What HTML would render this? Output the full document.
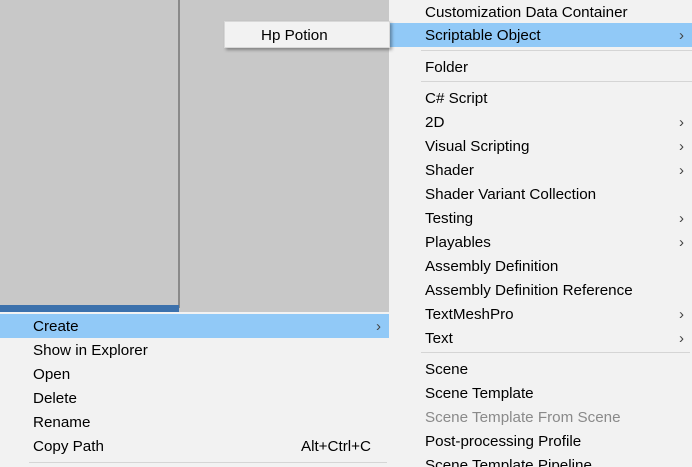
<!DOCTYPE html>
<html style="width:692px;height:467px;overflow:hidden"><head><style>
*{margin:0;padding:0;box-sizing:border-box}
body{width:692px;height:467px;overflow:hidden;background:#c8c8c8;position:relative;font-family:"Liberation Sans","Noto Sans CJK KR",sans-serif;font-size:15.2px;color:#000}
.vl{position:absolute;left:178px;top:0;width:2px;height:308px;background:#8a8a8a}
.bar{position:absolute;left:0;top:305px;width:179px;height:8px;background:#3c71ac}
.menu{position:absolute;background:#f2f2f2;overflow:hidden}
.it{position:absolute;left:0;right:0;height:24px;line-height:25px}
.it span{position:absolute}
.hl{background:#91c9f7}
.arr{position:absolute;right:8px;font-size:15px;color:#444}
.sep{position:absolute;height:1px;background:#d5d5d5;right:0}
.dis{color:#8a8a8a}
</style></head><body>
<div class="vl"></div><div class="bar"></div>
<div class="menu" style="left:0;top:312px;width:389px;height:155px">
 <div class="it hl" style="top:2px"><span style="left:33px">Create</span><span class="arr" style="right:8px">&#x203A;</span></div>
 <div class="it" style="top:26px"><span style="left:33px">Show in Explorer</span></div>
 <div class="it" style="top:50px"><span style="left:33px">Open</span></div>
 <div class="it" style="top:74px"><span style="left:33px">Delete</span></div>
 <div class="it" style="top:98px"><span style="left:33px">Rename</span></div>
 <div class="it" style="top:122px"><span style="left:33px">Copy Path</span><span style="right:18px">Alt+Ctrl+C</span></div>
 <div class="sep" style="left:29px;top:150px;right:2px"></div>
</div>
<div class="menu" style="left:389px;top:0;width:303px;height:467px">
 <div class="it" style="top:0"><span style="left:36px">Customization Data Container</span></div>
 <div class="it hl" style="top:23px"><span style="left:36px">Scriptable Object</span><span class="arr">&#x203A;</span></div>
 <div class="sep" style="left:32px;top:50px"></div>
 <div class="it" style="top:55px"><span style="left:36px">Folder</span></div>
 <div class="sep" style="left:32px;top:81px"></div>
 <div class="it" style="top:86px"><span style="left:36px">C# Script</span></div>
 <div class="it" style="top:110px"><span style="left:36px">2D</span><span class="arr">&#x203A;</span></div>
 <div class="it" style="top:134px"><span style="left:36px">Visual Scripting</span><span class="arr">&#x203A;</span></div>
 <div class="it" style="top:158px"><span style="left:36px">Shader</span><span class="arr">&#x203A;</span></div>
 <div class="it" style="top:182px"><span style="left:36px">Shader Variant Collection</span></div>
 <div class="it" style="top:206px"><span style="left:36px">Testing</span><span class="arr">&#x203A;</span></div>
 <div class="it" style="top:230px"><span style="left:36px">Playables</span><span class="arr">&#x203A;</span></div>
 <div class="it" style="top:254px"><span style="left:36px">Assembly Definition</span></div>
 <div class="it" style="top:278px"><span style="left:36px">Assembly Definition Reference</span></div>
 <div class="it" style="top:302px"><span style="left:36px">TextMeshPro</span><span class="arr">&#x203A;</span></div>
 <div class="it" style="top:326px"><span style="left:36px">Text</span><span class="arr">&#x203A;</span></div>
 <div class="sep" style="left:32px;top:352px;right:2px"></div>
 <div class="it" style="top:357px"><span style="left:36px">Scene</span></div>
 <div class="it" style="top:381px"><span style="left:36px">Scene Template</span></div>
 <div class="it dis" style="top:405px"><span style="left:36px">Scene Template From Scene</span></div>
 <div class="it" style="top:429px"><span style="left:36px">Post-processing Profile</span></div>
 <div class="it" style="top:453px"><span style="left:36px">Scene Template Pipeline</span></div>
</div>
<div class="menu" style="left:224px;top:21px;width:166px;height:27px;box-shadow:2px 2px 3px rgba(0,0,0,.35);border:1px solid #d8d8d8;overflow:visible">
 <div class="it" style="top:1px"><span style="left:36px">Hp Potion</span></div>
</div>
</body></html>
